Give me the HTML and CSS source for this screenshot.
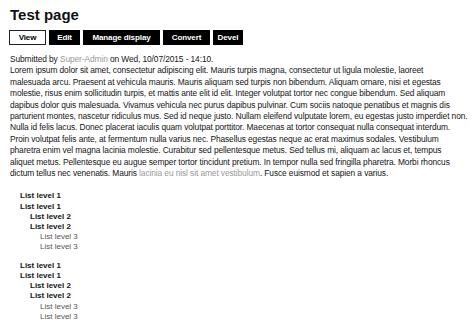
FILE: index.html
```html
<!DOCTYPE html>
<html>
<head>
<meta charset="utf-8">
<link rel="stylesheet" href="styles.css">
</head>
<body>
<div class="page">
  <h1 class="title">Test page</h1>
  <ul class="tabs">
    <li class="tab active tab-view">View</li>
    <li class="tab tab-edit">Edit</li>
    <li class="tab tab-manage">Manage display</li>
    <li class="tab tab-convert">Convert</li>
    <li class="tab tab-devel">Devel</li>
  </ul>
  <div class="submitted">Submitted by <span class="user">Super-Admin</span> on Wed, 10/07/2015 - 14:10.</div>
  <p class="body-text">Lorem ipsum dolor sit amet, consectetur adipiscing elit. Mauris turpis magna, consectetur ut ligula molestie, laoreet<br>
malesuada arcu. Praesent at vehicula mauris. Mauris aliquam sed turpis non bibendum. Aliquam ornare, nisi et egestas<br>
molestie, risus enim sollicitudin turpis, et mattis ante elit id elit. Integer volutpat tortor nec congue bibendum. Sed aliquam<br>
dapibus dolor quis malesuada. Vivamus vehicula nec purus dapibus pulvinar. Cum sociis natoque penatibus et magnis dis<br>
parturient montes, nascetur ridiculus mus. Sed id neque justo. Nullam eleifend vulputate lorem, eu egestas justo imperdiet non.<br>
Nulla id felis lacus. Donec placerat iaculis quam volutpat porttitor. Maecenas at tortor consequat nulla consequat interdum.<br>
Proin volutpat felis ante, at fermentum nulla varius nec. Phasellus egestas neque ac erat maximus sodales. Vestibulum<br>
pharetra enim vel magna lacinia molestie. Curabitur sed pellentesque metus. Sed tellus mi, aliquam ac lacus et, tempus<br>
aliquet metus. Pellentesque eu augue semper tortor tincidunt pretium. In tempor nulla sed fringilla pharetra. Morbi rhoncus<br>
dictum tellus nec venenatis. Mauris <span class="link">lacinia eu nisl sit amet vestibulum</span>. Fusce euismod et sapien a varius.</p>
  <ul class="list l1">
    <li>List level 1</li>
    <li>List level 1
      <ul class="list l2">
        <li>List level 2</li>
        <li>List level 2
          <ul class="list l3">
            <li>List level 3</li>
            <li>List level 3</li>
          </ul>
        </li>
      </ul>
    </li>
  </ul>
  <ol class="list l1">
    <li>List level 1</li>
    <li>List level 1
      <ol class="list l2">
        <li>List level 2</li>
        <li>List level 2
          <ol class="list l3">
            <li>List level 3</li>
            <li>List level 3</li>
          </ol>
        </li>
      </ol>
    </li>
  </ol>
</div>
</body>
</html>
```

FILE: styles.css
```css
html, body {
  margin: 0;
  padding: 0;
  background: #fff;
}
body {
  font-family: "Liberation Sans", Arial, sans-serif;
  color: #151515;
}
.page {
  padding: 6px 4px 0 9px;
}
.title {
  font-size: 15px;
  font-weight: bold;
  margin: 0 0 0 1px;
  line-height: 18px;
  color: #111;
}
.tabs {
  list-style: none;
  margin: 6px 0 0 0;
  padding: 0;
  display: flex;
  gap: 3px;
}
.tab {
  background: #000;
  color: #fff;
  font-size: 8px;
  font-weight: bold;
  height: 15px;
  line-height: 15px;
  text-align: center;
  box-sizing: border-box;
  letter-spacing: -0.1px;
}
.tab.active {
  background: #fff;
  color: #000;
  border: 1px solid #222;
  line-height: 13px;
}
.tab-view { width: 37px; }
.tab-edit { width: 31px; }
.tab-manage { width: 77px; }
.tab-convert { width: 47px; }
.tab-devel { width: 30px; }
.submitted {
  margin-top: 9px;
  font-size: 8.4px;
  line-height: 11.4px;
  padding-left: 1px;
  letter-spacing: -0.1px;
}
.user {
  color: #999;
}
.body-text {
  margin: 0;
  font-size: 8.4px;
  line-height: 11.4px;
  padding-left: 1px;
  letter-spacing: -0.1px;
  white-space: nowrap;
}
.link {
  color: #9a9a9a;
}
.list {
  list-style: none;
  margin: 0;
  padding: 0;
  font-size: 8px;
  line-height: 10.2px;
}
.list.l1 {
  padding-left: 11px;
  font-weight: bold;
  margin-top: 12px;
}
.list.l1 + .list.l1 {
  margin-top: 8px;
}
.list.l2 {
  padding-left: 10px;
  margin-top: 0;
}
.list.l3 {
  padding-left: 10px;
  font-weight: normal;
  color: #555;
}
```
